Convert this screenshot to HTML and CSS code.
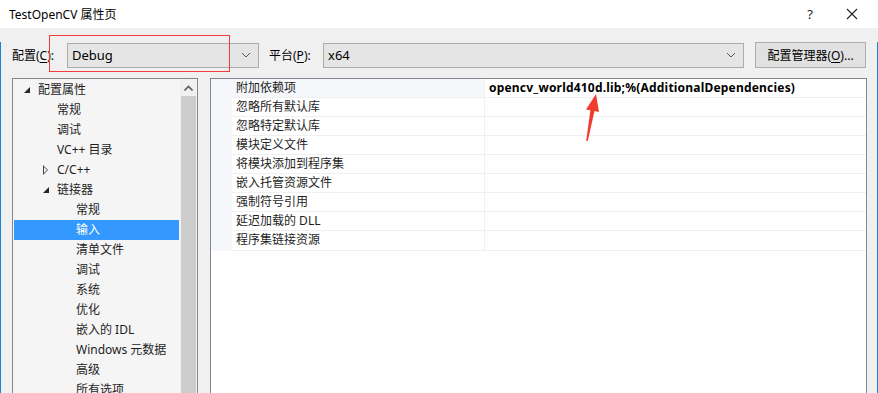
FILE: index.html
```html
<!DOCTYPE html>
<html lang="zh-CN">
<head>
    <meta charset="UTF-8">
    <title>TestOpenCV 属性页</title>
    <link rel="stylesheet" href="styles.css">
</head>
<body>
    <div class="titlebar">
        <span class="title">TestOpenCV 属性页</span>
        <span class="help">?</span>
        <svg class="close" width="12" height="12" viewBox="0 0 12 12">
            <path d="M1 1 L11 11 M11 1 L1 11" stroke="#222" stroke-width="1.1" fill="none"/>
        </svg>
    </div>

    <div class="dialog">
        <div class="config-row">
            <label class="lbl">配置(<u>C</u>):</label>
            <div class="combo combo-config">
                <span>Debug</span>
                <svg class="chev" width="10" height="6" viewBox="0 0 10 6"><path d="M1 1 L5 5 L9 1" stroke="#555" fill="none"/></svg>
            </div>
            <label class="lbl lbl-platform">平台(<u>P</u>):</label>
            <div class="combo combo-platform">
                <span>x64</span>
                <svg class="chev" width="10" height="6" viewBox="0 0 10 6"><path d="M1 1 L5 5 L9 1" stroke="#555" fill="none"/></svg>
            </div>
            <button class="btn">配置管理器(<u>O</u>)...</button>
        </div>

        <div class="panels">
            <div class="tree">
                <ul class="tree-list">
                    <li class="lv0"><span class="exp open"></span>配置属性</li>
                    <li class="lv1">常规</li>
                    <li class="lv1">调试</li>
                    <li class="lv1">VC++ 目录</li>
                    <li class="lv1"><span class="exp closed"></span>C/C++</li>
                    <li class="lv1"><span class="exp open"></span>链接器</li>
                    <li class="lv2">常规</li>
                    <li class="lv2 selected">输入</li>
                    <li class="lv2">清单文件</li>
                    <li class="lv2">调试</li>
                    <li class="lv2">系统</li>
                    <li class="lv2">优化</li>
                    <li class="lv2">嵌入的 IDL</li>
                    <li class="lv2">Windows 元数据</li>
                    <li class="lv2">高级</li>
                    <li class="lv2">所有选项</li>
                </ul>
                <div class="vscroll">
                    <div class="vscroll-up">
                        <svg width="9" height="6" viewBox="0 0 9 6"><path d="M0.5 5.5 L4.5 1.5 L8.5 5.5" stroke="#606060" stroke-width="1.6" fill="none"/></svg>
                    </div>
                    <div class="vscroll-thumb"></div>
                </div>
            </div>

            <div class="grid">
                <div class="grid-margin"></div>
                <div class="grid-body">
                    <div class="prop first"><div class="pname">附加依赖项</div><div class="pval">opencv_world410d.lib;%(AdditionalDependencies)</div></div>
                    <div class="prop"><div class="pname">忽略所有默认库</div><div class="pval"></div></div>
                    <div class="prop"><div class="pname">忽略特定默认库</div><div class="pval"></div></div>
                    <div class="prop"><div class="pname">模块定义文件</div><div class="pval"></div></div>
                    <div class="prop"><div class="pname">将模块添加到程序集</div><div class="pval"></div></div>
                    <div class="prop"><div class="pname">嵌入托管资源文件</div><div class="pval"></div></div>
                    <div class="prop"><div class="pname">强制符号引用</div><div class="pval"></div></div>
                    <div class="prop"><div class="pname">延迟加载的 DLL</div><div class="pval"></div></div>
                    <div class="prop"><div class="pname">程序集链接资源</div><div class="pval"></div></div>
                </div>
            </div>
        </div>
    </div>

    <!-- 标注 -->
    <div class="mark-box"></div>
    <svg class="mark-arrow" width="878" height="393" viewBox="0 0 878 393">
        <polygon points="596,94 599,112 594.5,111 587.8,141 586.2,140.8 590.4,110.2 586,109.4" fill="#f23b2f"/>
    </svg>
</body>
</html>
```

FILE: styles.css
```css
html, body {
    margin: 0;
    padding: 0;
}
body {
    width: 878px;
    height: 393px;
    overflow: hidden;
    background: #f0f0f0;
    font-family: "Noto Sans", "Noto Sans CJK SC", sans-serif;
    font-size: 12px;
    color: #000;
    position: relative;
}
u {
    text-decoration: underline;
    text-underline-offset: 2px;
}

/* 标题栏 */
.titlebar {
    height: 28px;
    background: #fff;
    display: flex;
    align-items: center;
    padding-left: 9px;
}
.title {
    flex: 1;
    font-size: 12px;
}
.help {
    font-size: 13px;
    margin-right: 33px;
    color: #222;
}
.close {
    margin-right: 20px;
}

/* 主体 */
.dialog {
    border-left: 1px solid #1883d7;
    border-right: 1px solid #1883d7;
    height: 365px;
    box-sizing: border-box;
}
.config-row {
    display: flex;
    align-items: center;
    height: 26px;
    margin-top: 14px;
    padding-left: 11px;
}
.lbl {
    width: 55px;
}
.lbl-platform {
    margin-left: 10px;
    width: 54px;
}
.combo {
    height: 25px;
    box-sizing: border-box;
    border: 1px solid #acacac;
    background: #e5e5e5;
    display: flex;
    align-items: center;
    padding-left: 4px;
    padding-right: 7px;
    font-size: 13px;
}
.combo span {
    flex: 1;
}
.combo-config {
    width: 192px;
}
.combo-platform {
    width: 421px;
    padding-left: 4px;
}
.btn {
    margin-left: 11px;
    height: 26px;
    width: 111px;
    border: 1px solid #adadad;
    background: #e1e1e1;
    font-family: inherit;
    font-size: 12px;
    padding: 0;
    color: #000;
}

.panels {
    display: flex;
    margin-top: 10px;
    height: 330px;
}

/* 树 */
.tree {
    margin-left: 11px;
    width: 186px;
    border: 1px solid #828790;
    border-bottom: none;
    background: #f5f5f5;
    display: flex;
    box-sizing: border-box;
}
.tree-list {
    list-style: none;
    margin: 0;
    padding: 1px 1px 0 1px;
    flex: 1;
}
.tree-list li {
    height: 20px;
    line-height: 20px;
    position: relative;
    white-space: nowrap;
    color: #1e1e1e;
}
.lv0 { padding-left: 24px; }
.lv1 { padding-left: 43px; }
.lv2 { padding-left: 62px; }
.tree-list li.selected {
    background: #3399ff;
    color: #fff;
}
.exp {
    position: absolute;
    top: 7px;
    width: 0;
    height: 0;
}
.lv0 .exp { left: 10px; }
.lv1 .exp { left: 29px; }
.exp.open {
    border-left: 6px solid transparent;
    border-bottom: 6px solid #262626;
}
.exp.closed {
    top: 5px;
    width: 5px;
    height: 8px;
}
.exp.closed::before {
    content: "";
    position: absolute;
    left: 0;
    top: 0;
    border-top: 5px solid transparent;
    border-bottom: 5px solid transparent;
    border-left: 5px solid #444;
}
.exp.closed::after {
    content: "";
    position: absolute;
    left: 1px;
    top: 2px;
    border-top: 3px solid transparent;
    border-bottom: 3px solid transparent;
    border-left: 3px solid #f5f5f5;
}
.vscroll {
    width: 17px;
    background: #f0f0f0;
    display: flex;
    flex-direction: column;
}
.vscroll-up {
    height: 17px;
    display: flex;
    align-items: center;
    justify-content: center;
}
.vscroll-thumb {
    flex: 1;
    margin: 0 1px 0 1px;
    background: #cdcdcd;
}

/* 属性表 */
.grid {
    margin-left: 12px;
    width: 657px;
    border: 1px solid #828790;
    border-bottom: none;
    background: #fff;
    display: flex;
    box-sizing: border-box;
}
.grid-margin {
    width: 21px;
    background: #f5f7fb;
    height: 172px;
}
.grid-body {
    flex: 1;
}
.prop {
    display: flex;
    height: 19px;
    border-bottom: 1px solid #f0f0f0;
    box-sizing: border-box;
}
.prop:last-child {
    height: 20px;
}
.pname {
    width: 253px;
    box-sizing: border-box;
    padding-left: 4px;
    line-height: 18px;
    border-right: 1px solid #f0f0f0;
    color: #1e1e1e;
    white-space: nowrap;
}
.prop.first .pname {
    background: #f5f7fb;
}
.pval {
    flex: 1;
    padding-left: 4px;
    line-height: 18px;
    font-weight: bold;
    letter-spacing: 0.2px;
    white-space: nowrap;
}

/* 标注 */
.mark-box {
    position: absolute;
    left: 49px;
    top: 35px;
    width: 179px;
    height: 35px;
    border: 1px solid #f03c3c;
}
.mark-arrow {
    position: absolute;
    left: 0;
    top: 0;
}
```
